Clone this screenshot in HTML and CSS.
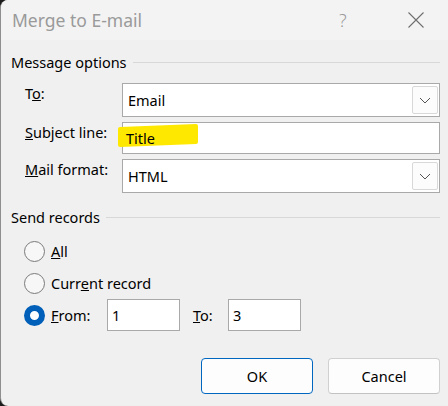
FILE: index.html
```html
<!DOCTYPE html>
<html lang="en">
<head>
<meta charset="utf-8">
<title>Merge to E-mail</title>
<link rel="stylesheet" href="styles.css">
</head>
<body>
<div class="window">
  <div class="titlebar">
    <span class="title">Merge to E-mail</span>
    <span class="help">?</span>
    <span class="close">
      <svg width="16" height="16" viewBox="0 0 16 16"><path d="M0.5 0.5 L15.5 15.5 M15.5 0.5 L0.5 15.5" stroke="#6f6f6f" stroke-width="1.1" fill="none"/></svg>
    </span>
  </div>
  <div class="content">
    <div class="group-head"><span>Message options</span><span class="rule"></span></div>

    <div class="field-row">
      <span class="label">T<u>o</u>:</span>
      <div class="combo">
        <span class="value">Email</span>
        <span class="drop"><svg width="12" height="7" viewBox="0 0 12 7"><path d="M1 1 L6 6 L11 1" stroke="#555" stroke-width="1" fill="none"/></svg></span>
      </div>
    </div>

    <div class="field-row">
      <span class="label"><u>S</u>ubject line:</span>
      <div class="textbox subject">
        <svg class="highlight" width="84" height="26" viewBox="0 0 84 26"><path d="M2 6 Q2 4 4 4 L80 1 Q82 1 82 3 L82 19 Q82 21 80 21 L4 24 Q2 24 2 22 Z" fill="#ffe800"/></svg>
        <span class="value">Title</span>
      </div>
    </div>

    <div class="field-row">
      <span class="label"><u>M</u>ail format:</span>
      <div class="combo">
        <span class="value">HTML</span>
        <span class="drop"><svg width="12" height="7" viewBox="0 0 12 7"><path d="M1 1 L6 6 L11 1" stroke="#555" stroke-width="1" fill="none"/></svg></span>
      </div>
    </div>

    <div class="group-head second"><span>Send records</span><span class="rule"></span></div>

    <div class="radios">
      <div class="radio-row"><span class="radio"></span><span><u>A</u>ll</span></div>
      <div class="radio-row"><span class="radio"></span><span>Curr<u>e</u>nt record</span></div>
      <div class="radio-row">
        <span class="radio checked"></span><span class="from-label"><u>F</u>rom:</span>
        <div class="textbox small"><span class="value">1</span></div>
        <span class="to-label"><u>T</u>o:</span>
        <div class="textbox small"><span class="value">3</span></div>
      </div>
    </div>

    <div class="buttons">
      <button class="btn default">OK</button>
      <button class="btn">Cancel</button>
    </div>
  </div>
</div>
</body>
</html>
```

FILE: styles.css
```css
html {
  background: #1c1c1c;
}
body {
  margin: 0;
  font-family: "Noto Sans", "Open Sans", sans-serif;
  font-size: 14.5px;
  color: #000;
}
.window {
  width: 447px;
  height: 406px;
  border-left: 1px solid #8f8f8f;
  border-top-left-radius: 8px;
  border-bottom-left-radius: 8px;
  background: #f0f0f0;
  overflow: hidden;
  display: flex;
  flex-direction: column;
}
.titlebar {
  height: 40px;
  flex: none;
  background: #f3f3f3;
  display: flex;
  align-items: center;
  padding-left: 11px;
}
.title {
  font-size: 17.5px;
  color: #9a9a9a;
  flex: 1;
  margin-top: -1px;
}
.help {
  font-size: 18px;
  color: #9a9a9a;
  width: 12px;
  margin-right: 57px;
  margin-top: -1px;
  font-weight: 300;
}
.close {
  width: 16px;
  height: 16px;
  margin-right: 24px;
  margin-top: -1px;
  display: flex;
}
.content {
  padding: 0 8px 0 10px;
  flex: 1;
  display: flex;
  flex-direction: column;
}
.group-head {
  display: flex;
  align-items: center;
  height: 20px;
  margin-top: 12px;
  gap: 6px;
  line-height: 20px;
}
.group-head.second {
  margin-top: 14px;
}
.rule {
  flex: 1;
  height: 1px;
  background: #d8d8d8;
  margin-top: 0;
}
.field-row {
  display: flex;
  align-items: flex-start;
  margin-top: 5px;
}
.group-head + .field-row {
  margin-top: 11px;
}
.label {
  width: 97px;
  padding-left: 14px;
  line-height: 20px;
  flex: none;
}
.field-row:first-of-type .label {
  padding-top: 2px;
}
.combo, .textbox {
  flex: 1;
  background: #fff;
  border: 1px solid #a9a9a9;
  box-sizing: border-box;
  display: flex;
  align-items: center;
  position: relative;
}
.combo {
  height: 34px;
  padding-left: 5px;
}
.combo .value {
  flex: 1;
}
.drop {
  width: 26px;
  height: 28px;
  box-sizing: border-box;
  border: 1px solid #d8d8d8;
  border-radius: 2px;
  background: #fcfcfc;
  margin-right: 1px;
  display: flex;
  align-items: center;
  justify-content: center;
}
.textbox {
  height: 32px;
  padding-left: 3px;
}
.subject .value {
  position: relative;
  z-index: 1;
}
.highlight {
  position: absolute;
  left: -7px;
  top: 0px;
}
.radios {
  margin-top: 8px;
  display: flex;
  flex-direction: column;
}
.radio-row {
  height: 32px;
  display: flex;
  align-items: center;
  padding-left: 13px;
}
.radio {
  width: 21px;
  height: 21px;
  box-sizing: border-box;
  border: 1px solid #7a7a7a;
  border-radius: 50%;
  background: #f7f7f7;
  margin-right: 6px;
  flex: none;
}
.radio.checked {
  border: 6.5px solid #005fb8;
  background: #fff;
}
.from-label {
  width: 56px;
}
.to-label {
  margin-left: 13px;
  width: 35px;
}
.textbox.small {
  flex: none;
  width: 73px;
  padding-left: 4px;
}
.buttons {
  margin-top: 27px;
  display: flex;
  justify-content: flex-end;
  gap: 15px;
}
.btn {
  width: 112px;
  height: 36px;
  font-family: inherit;
  font-size: 14.5px;
  color: #000;
  background: #fdfdfd;
  border: 1px solid #d0d0d0;
  border-bottom-color: #c2c2c2;
  border-radius: 4px;
  padding: 0;
}
.btn.default {
  border: 1px solid #0067c0;
}
```
